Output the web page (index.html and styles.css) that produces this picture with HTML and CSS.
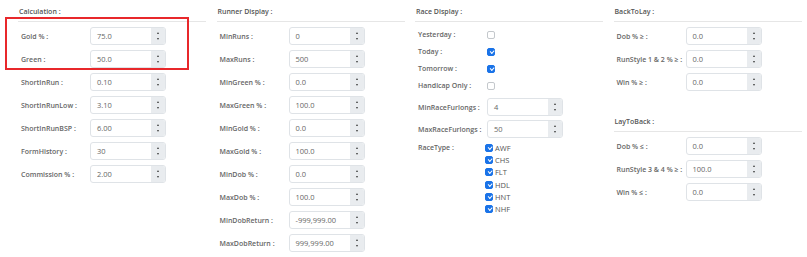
FILE: index.html
```html
<!DOCTYPE html>
<html lang="en">
<head>
    <meta charset="UTF-8">
    <title>Settings</title>
    <link rel="stylesheet" href="styles.css">
</head>
<body>
    <div class="page">
        <div class="col">
            <div class="section-title">Calculation :</div>
            <div class="rows">
                <div class="row"><span class="label">Gold % :</span><div class="num"><span class="val">75.0</span><span class="spin"></span></div></div>
                <div class="row"><span class="label">Green :</span><div class="num"><span class="val">50.0</span><span class="spin"></span></div></div>
                <div class="row"><span class="label">ShortInRun :</span><div class="num"><span class="val">0.10</span><span class="spin"></span></div></div>
                <div class="row"><span class="label">ShortInRunLow :</span><div class="num"><span class="val">3.10</span><span class="spin"></span></div></div>
                <div class="row"><span class="label">ShortInRunBSP :</span><div class="num"><span class="val">6.00</span><span class="spin"></span></div></div>
                <div class="row"><span class="label">FormHistory :</span><div class="num"><span class="val">30</span><span class="spin"></span></div></div>
                <div class="row"><span class="label">Commission % :</span><div class="num"><span class="val">2.00</span><span class="spin"></span></div></div>
            </div>
        </div>

        <div class="col">
            <div class="section-title">Runner Display :</div>
            <div class="rows">
                <div class="row"><span class="label">MinRuns :</span><div class="num"><span class="val">0</span><span class="spin"></span></div></div>
                <div class="row"><span class="label">MaxRuns :</span><div class="num"><span class="val">500</span><span class="spin"></span></div></div>
                <div class="row"><span class="label">MinGreen % :</span><div class="num"><span class="val">0.0</span><span class="spin"></span></div></div>
                <div class="row"><span class="label">MaxGreen % :</span><div class="num"><span class="val">100.0</span><span class="spin"></span></div></div>
                <div class="row"><span class="label">MinGold % :</span><div class="num"><span class="val">0.0</span><span class="spin"></span></div></div>
                <div class="row"><span class="label">MaxGold % :</span><div class="num"><span class="val">100.0</span><span class="spin"></span></div></div>
                <div class="row"><span class="label">MinDob % :</span><div class="num"><span class="val">0.0</span><span class="spin"></span></div></div>
                <div class="row"><span class="label">MaxDob % :</span><div class="num"><span class="val">100.0</span><span class="spin"></span></div></div>
                <div class="row"><span class="label">MinDobReturn :</span><div class="num"><span class="val">-999,999.00</span><span class="spin"></span></div></div>
                <div class="row"><span class="label">MaxDobReturn :</span><div class="num"><span class="val">999,999.00</span><span class="spin"></span></div></div>
            </div>
        </div>

        <div class="col">
            <div class="section-title">Race Display :</div>
            <div class="rows race">
                <div class="row check-row"><span class="label">Yesterday :</span><span class="box"></span></div>
                <div class="row check-row"><span class="label">Today :</span><span class="box on"></span></div>
                <div class="row check-row"><span class="label">Tomorrow :</span><span class="box on"></span></div>
                <div class="row check-row"><span class="label">Handicap Only :</span><span class="box"></span></div>
                <div class="row inp"><span class="label">MinRaceFurlongs :</span><div class="num"><span class="val">4</span><span class="spin"></span></div></div>
                <div class="row inp"><span class="label">MaxRaceFurlongs :</span><div class="num"><span class="val">50</span><span class="spin"></span></div></div>
                <div class="row type-row">
                    <span class="label">RaceType :</span>
                    <ul class="types">
                        <li><span class="box on"></span>AWF</li>
                        <li><span class="box on"></span>CHS</li>
                        <li><span class="box on"></span>FLT</li>
                        <li><span class="box on"></span>HDL</li>
                        <li><span class="box on"></span>HNT</li>
                        <li><span class="box on"></span>NHF</li>
                    </ul>
                </div>
            </div>
        </div>

        <div class="col">
            <div class="section-title">BackToLay :</div>
            <div class="rows">
                <div class="row"><span class="label">Dob % ≥ :</span><div class="num"><span class="val">0.0</span><span class="spin"></span></div></div>
                <div class="row"><span class="label">RunStyle 1 &amp; 2 % ≥ :</span><div class="num"><span class="val">0.0</span><span class="spin"></span></div></div>
                <div class="row"><span class="label">Win % ≥ :</span><div class="num"><span class="val">0.0</span><span class="spin"></span></div></div>
            </div>

            <div class="section-title second">LayToBack :</div>
            <div class="rows">
                <div class="row"><span class="label">Dob % ≤ :</span><div class="num"><span class="val">0.0</span><span class="spin"></span></div></div>
                <div class="row"><span class="label">RunStyle 3 &amp; 4 % ≥ :</span><div class="num"><span class="val">100.0</span><span class="spin"></span></div></div>
                <div class="row"><span class="label">Win % ≤ :</span><div class="num"><span class="val">0.0</span><span class="spin"></span></div></div>
            </div>
        </div>
    </div>

    <div class="highlight"></div>
</body>
</html>
```

FILE: styles.css
```css
* {
    box-sizing: border-box;
    margin: 0;
    padding: 0;
}

body {
    position: relative;
    background: #fff;
    font-family: 'Open Sans', 'Noto Sans', sans-serif;
    color: #666;
}

.page {
    display: grid;
    grid-template-columns: repeat(4, 188px);
    column-gap: 10.5px;
    align-items: start;
    padding: 7px 0 0 18px;
}

.section-title {
    font-size: 7px;
    font-weight: 600;
    color: #555;
    line-height: 10px;
    padding: 0 0 4px 1px;
    border-bottom: 1px solid #e6e6e6;
}

.section-title.second {
    margin-top: 26px;
}

.rows {
    display: flex;
    flex-direction: column;
    gap: 5px;
    padding: 5px 0 0 3px;
}

.row {
    display: flex;
    align-items: center;
    height: 18px;
}

.label {
    flex: none;
    width: 69px;
    font-size: 7px;
    font-weight: 600;
    color: #666;
    white-space: nowrap;
}

.num {
    display: flex;
    width: 76px;
    height: 18px;
    border: 1px solid #dfe3e7;
    border-radius: 3px;
    overflow: hidden;
}

.num .val {
    flex: 1;
    padding-left: 6px;
    font-size: 7.5px;
    line-height: 16px;
    color: #666;
}

.spin {
    width: 14px;
    background: #e9ecef;
    display: flex;
    flex-direction: column;
    align-items: center;
    justify-content: center;
    gap: 3.5px;
}

.spin::before,
.spin::after {
    content: '';
    border-left: 1.5px solid transparent;
    border-right: 1.5px solid transparent;
}

.spin::before {
    border-bottom: 2.5px solid #3a3a3a;
}

.spin::after {
    border-top: 2.5px solid #3a3a3a;
}

/* race display column */
.rows.race {
    gap: 0;
    padding-top: 4px;
}

.check-row {
    height: 17px;
}

.row.inp {
    margin-top: 4px;
}

.row.type-row {
    height: auto;
    align-items: flex-start;
    margin-top: 6px;
}

.type-row .label {
    line-height: 8px;
}

.box {
    flex: none;
    display: inline-block;
    width: 8px;
    height: 8px;
    border: 1px solid #c4c8cc;
    border-radius: 2px;
    background: #fff;
    position: relative;
}

.box.on {
    background: #1a73e8;
    border-color: #1a73e8;
}

.box.on::after {
    content: '';
    position: absolute;
    left: 1.5px;
    top: 1px;
    width: 3px;
    height: 1.5px;
    border-left: 1px solid #fff;
    border-bottom: 1px solid #fff;
    transform: rotate(-45deg);
}

.types {
    list-style: none;
    margin-left: -2px;
    margin-top: -2px;
}

.types li {
    display: flex;
    align-items: center;
    gap: 2px;
    height: 12.2px;
    font-size: 7.5px;
    color: #555;
}

.highlight {
    position: absolute;
    left: 5px;
    top: 17px;
    width: 184px;
    height: 53px;
    border: 2px solid #e8282b;
}
```
